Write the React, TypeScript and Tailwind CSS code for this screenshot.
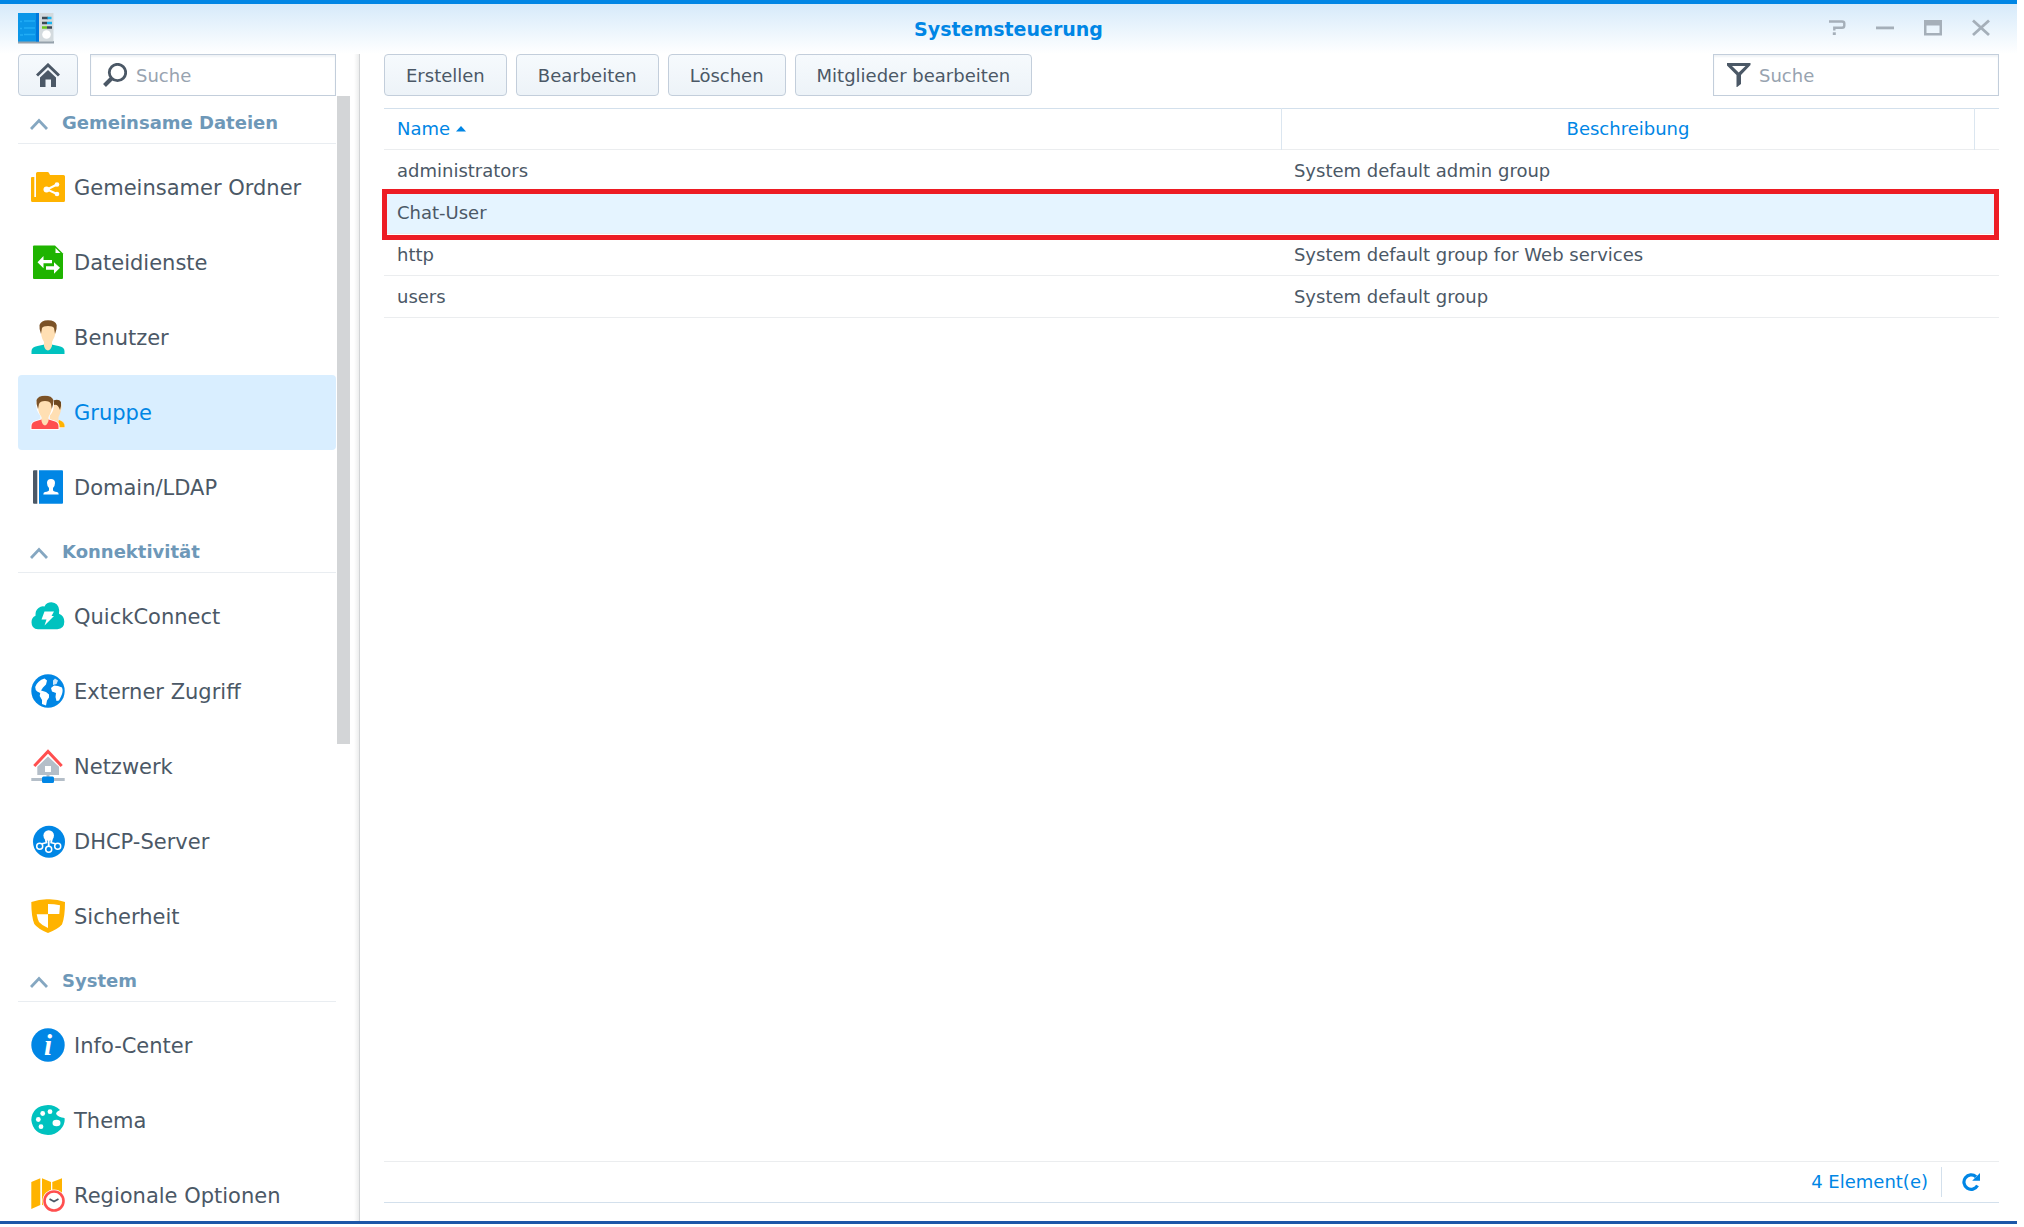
import type { ReactNode } from 'react';

type NavItem = { label: string; icon: ReactNode; active?: boolean };
type NavSection = { title: string; items: NavItem[] };

function Icon({ children }: { children: ReactNode }) {
  return (
    <svg viewBox="0 0 35 35" className="size-[35px] shrink-0" aria-hidden>
      {children}
    </svg>
  );
}

const FolderIcon = (
  <Icon>
    <path d="M2 7h2.300v20H6V3.500Q6 2 7.500 2h10q1 0 1.500 1l1 2h13.500Q35 5 35 6.500v24q0 1.500-1.500 1.500h-31Q1 32 1 30.500V8q0-1 1-1z" fill="#ffb300" />
    <path d="M27 14.500l-10 5 10 4.500" fill="none" stroke="#fff" strokeWidth="2" />
    <circle cx="27" cy="14.500" r="2.300" fill="#fff" />
    <circle cx="16.500" cy="19.500" r="3" fill="#fff" />
    <circle cx="27" cy="24" r="2.300" fill="#fff" />
  </Icon>
);

const FileIcon = (
  <Icon>
    <path d="M4 .5h21l8 8V33q0 1-1 1H4q-1 0-1-1V1.500Q3 .5 4 .5z" fill="#1fb400" />
    <path d="M25.500 3v5h5z" fill="#fff" />
    <path d="M7.500 17.300l6-6.300v4H22v3.300h-8.500v5z" fill="#fff" />
    <path d="M30 22.700l-6 6v-4h-8v-3.400h8v-4z" fill="#fff" />
  </Icon>
);

const UserIcon = (
  <Icon>
    <path d="M1.500 34v-3q0-4 6-5l7-1.500h7l7 1.500q6 1 6 5v3z" fill="#00c2bf" />
    <path d="M11 8q0-4 7-4t7.500 4c.5 7-1.500 10-3.500 14v4q-1.500 4-4 4.500Q15 30 14 26v-4c-2.500-4-3.500-8-3-14z" fill="#ffdfb3" />
    <path d="M11 14Q9 9 9.500 5 11 .5 18 .3q7.500.2 8.700 4.700.5 4-1.700 9L24 8q-1-2-6-2t-6 2z" fill="#7b5227" />
  </Icon>
);

const GroupIcon = (
  <Icon>
    <path d="M20 12q1-8 8-7 4 1 3.500 8c-1 5-2 7-3 9v3q6 1 6 4v4H20z" fill="#ffdfb3" />
    <path d="M29 25q6 2 5.500 7h-7z" fill="#ffb300" />
    <path d="M23 5.500q6-2 8 1.500.5 4-1 8-2-6-6-5z" fill="#6d4820" />
    <path d="M.5 35v-4q0-4 5-5.500l5-1.500v-3C7 17 6 13 6 8q0-7 9-7.500Q24 1 24 8c0 6-1 9-4.500 13v3l5 1.500q5 1.500 5 5V35z" fill="#fff" />
    <path d="M1.500 34v-3q0-4 5-5l5-1.500h7l5 1.500q5 1 5 5v3z" fill="#ff4f4f" />
    <path d="M8 9q0-4 7-4t7 4c.3 6-1.500 9-3.500 13v4q-1.500 4-3.500 4.500-2.500-.5-3.500-4.500v-4C9 18 7.700 15 8 9z" fill="#ffdfb3" />
    <path d="M8 14Q6 9 6.500 5 8 .8 15 .7q7 .1 8.300 4.300.5 4-1.500 9L21 9q-1-3-6-3T9 9z" fill="#7b5227" />
  </Icon>
);

const LdapIcon = (
  <Icon>
    <path d="M4 .3h3.300v33.400H4q-1 0-1-1V1.300q0-1 1-1z" fill="#4b5866" />
    <path d="M9 .3h23q1 0 1 1v31.400q0 1-1 1H9z" fill="#0086e5" />
    <path d="M17 13q0-4 4-4t4 4q0 3-2 5v2q0 1.500 4 2 1.700.3 1.700 2.500H13.300q0-2.200 1.700-2.500 4-.5 4-2v-2q-2-2-2-5z" fill="#fff" />
  </Icon>
);

const CloudIcon = (
  <Icon>
    <path d="M8 30.300q-6.500-.3-6.500-7 0-5 4-6.500-.5-5 3-7.800 3-2.500 6-1.500 2-4.200 7-4.200 7 .7 7.700 8-.2 2-.2 3.500 5.300 2 5.300 8 0 7-7 7.500z" fill="#00c2bf" />
    <path d="M14.500 12.500H24L21.500 17H24l-9.500 9.500 2-6h-5z" fill="#fff" />
  </Icon>
);

const GlobeIcon = (
  <Icon>
    <circle cx="18" cy="17" r="16.700" fill="#0086e5" />
    <path d="M14.500 4.500q-7 2-9.300 8.500 0 3 2 4.500l3 1.500-.5 3 2.300 4v4l4 1.500 1-5 2-3v-3l-3-2.500-5-1.500 2-3 3-3 1-4z" fill="#fff" />
    <path d="M21 14l3-2.500 4 .5 4 1.500q1.500 4-1 9l-2 4-2.500.5-1-4 .5-4-4-1.500z" fill="#fff" />
    <path d="M23 6.500l2-2 3 2-1.500 3.500-3.500 1z" fill="#fff" opacity=".8" />
  </Icon>
);

const HomeNetIcon = (
  <Icon>
    <path d="M18 7.500l11 10.300V26H7.300v-8.200z" fill="#b4bec8" />
    <path d="M4.300 17L18 2.500 31.700 17" fill="none" stroke="#ff4f4f" strokeWidth="3" />
    <rect x="15" y="17" width="6" height="6" fill="#fff" />
    <path d="M1.300 29h33.400v3H1.300zM16.500 26h3v2h-3z" fill="#b4bec8" />
    <rect x="12" y="27.500" width="12" height="6.500" rx="1.500" fill="#0086e5" />
  </Icon>
);

const DhcpIcon = (
  <Icon>
    <circle cx="19" cy="17.700" r="16" fill="#0086e5" />
    <path d="M15.500 14l1 5M18.700 15v7M22 14l-1 5M17 18.500l-6 1.500M20.500 18.500l6 1.500" stroke="#fff" strokeWidth="1.800" />
    <circle cx="18.700" cy="11.500" r="5.300" fill="#fff" />
    <g fill="#0086e5" stroke="#fff" strokeWidth="1.500">
      <circle cx="9.700" cy="22.300" r="3" />
      <circle cx="18.700" cy="25.300" r="3" />
      <circle cx="27.700" cy="22.300" r="3" />
    </g>
  </Icon>
);

const ShieldIcon = (
  <Icon>
    <path d="M1.300 3Q10 0 18 .3 27 0 35 3q0 15-3 22.500Q28 30 18 34 8 30 4.300 25 1.300 18 1.300 3z" fill="#ffb300" />
    <path d="M18 5q6 0 12 1.200l-.7 8.800H18zM6.700 15.300H18V29q-6-2.500-9-6-1.500-3-2.300-7.700z" fill="#fff" />
  </Icon>
);

const InfoIcon = (
  <Icon>
    <circle cx="18" cy="17" r="16.700" fill="#0086e5" />
    <text x="18" y="27" textAnchor="middle" fill="#fff" fontFamily="Liberation Serif, serif" fontSize="29" fontWeight="bold" fontStyle="italic">
      i
    </text>
  </Icon>
);

const PaletteIcon = (
  <Icon>
    <path d="M18 2q7 0 12 5-5 2.500-3.500 4.500 2 2.500 8 3.500 1 6-4 11.500Q25 32 18 32 3 31 1.300 17 2 3 18 2z" fill="#00c2bf" />
    <g fill="#fff">
      <circle cx="20" cy="8.700" r="2.400" />
      <circle cx="12.700" cy="10.500" r="2.400" />
      <circle cx="8.300" cy="16.500" r="2.400" />
      <circle cx="11" cy="23.700" r="2.400" />
      <ellipse cx="26.500" cy="20" rx="4" ry="3.200" />
    </g>
  </Icon>
);

const RegionIcon = (
  <Icon>
    <path d="M1.300 4l9-3.700V27l-9 4zM12 .3L21 4v26l-9-3.300zM22.300 4L32 .3V27l-9.700 3z" fill="#ffb300" />
    <circle cx="24" cy="23" r="11.500" fill="#fff" />
    <circle cx="24" cy="23" r="9.500" fill="#fff" stroke="#ff4f4f" strokeWidth="2.600" />
    <path d="M19.500 21l4.500 2.500 4.500-2.500" fill="none" stroke="#4b5866" strokeWidth="1.800" />
  </Icon>
);

const sections: NavSection[] = [
  {
    title: 'Gemeinsame Dateien',
    items: [
      { label: 'Gemeinsamer Ordner', icon: FolderIcon },
      { label: 'Dateidienste', icon: FileIcon },
      { label: 'Benutzer', icon: UserIcon },
      { label: 'Gruppe', icon: GroupIcon, active: true },
      { label: 'Domain/LDAP', icon: LdapIcon }
    ]
  },
  {
    title: 'Konnektivität',
    items: [
      { label: 'QuickConnect', icon: CloudIcon },
      { label: 'Externer Zugriff', icon: GlobeIcon },
      { label: 'Netzwerk', icon: HomeNetIcon },
      { label: 'DHCP-Server', icon: DhcpIcon },
      { label: 'Sicherheit', icon: ShieldIcon }
    ]
  },
  {
    title: 'System',
    items: [
      { label: 'Info-Center', icon: InfoIcon },
      { label: 'Thema', icon: PaletteIcon },
      { label: 'Regionale Optionen', icon: RegionIcon }
    ]
  }
];

const actions = ['Erstellen', 'Bearbeiten', 'Löschen', 'Mitglieder bearbeiten'];

const groups = [
  { name: 'administrators', description: 'System default admin group' },
  { name: 'Chat-User', description: '', selected: true },
  { name: 'http', description: 'System default group for Web services' },
  { name: 'users', description: 'System default group' }
];

function TitleBar() {
  return (
    <header className="grid h-[50px] shrink-0 grid-cols-3 items-start">
      <div className="flex pt-2 pl-[18px]">
        <svg viewBox="0 0 36 32" className="h-8 w-9" aria-hidden>
          <path d="M0 29h36v2.500H0z" fill="#7d8b96" opacity=".8" />
          <path d="M21 1h14.500v28.500H21z" fill="#d3dade" />
          <path d="M0 1h21v28.500H0z" fill="#0b96e8" />
          <path d="M18 1h3v28.500h-3z" fill="#0078dc" />
          <path d="M2 9.500h2M6 9h11M2 16.500h2M6 16h11M2 23h3M6 22.500h11" stroke="#22adf5" strokeWidth="1.500" />
          <path d="M24 6h6M24 11h5M29 15.500h5" stroke="#3c4a55" strokeWidth="2.500" />
          <path d="M29.500 6h4M29 11h5" stroke="#19b5f0" strokeWidth="2.500" />
          <path d="M24 15.500h5" stroke="#6cc71c" strokeWidth="2.500" />
          <circle cx="28.500" cy="22.500" r="4.300" fill="#fff" />
        </svg>
      </div>
      <h1 className="pt-[13px] text-center text-[19px] leading-6 font-bold text-[#0086e5]">Systemsteuerung</h1>
      <div className="flex justify-end gap-[30px] pt-[15px] pr-[27px] text-[#a5afb9]">
        <button type="button" aria-label="Hilfe">
          <svg viewBox="0 0 18 18" className="size-[18px]" fill="none" stroke="currentColor" strokeWidth="2.400">
            <path d="M1 2.500h13q2.300 0 2.300 2v2q0 2.300-2.300 2.300H6.300v2.700" />
            <path d="M6.300 13.300V16" strokeWidth="3" />
          </svg>
        </button>
        <button type="button" aria-label="Minimieren">
          <svg viewBox="0 0 18 18" className="size-[18px]">
            <path d="M0 7.500h18v2.800H0z" fill="currentColor" />
          </svg>
        </button>
        <button type="button" aria-label="Maximieren">
          <svg viewBox="0 0 18 18" className="size-[18px]">
            <path d="M0 1h18v15.500H0zM2.500 6.500v7.500h13V6.500z" fill="currentColor" fillRule="evenodd" />
          </svg>
        </button>
        <button type="button" aria-label="Schließen">
          <svg viewBox="0 0 18 18" className="size-[18px]" fill="none" stroke="currentColor" strokeWidth="2.800">
            <path d="M1 1.500l16 14.500M17 1.500L1 16" />
          </svg>
        </button>
      </div>
    </header>
  );
}

function Sidebar() {
  return (
    <aside className="flex w-[360px] shrink-0">
      <div className="flex min-w-0 flex-1 flex-col pl-[18px]">
        <div className="flex w-[318px] shrink-0 gap-3">
          <button
            type="button"
            aria-label="Startseite"
            className="flex h-[42px] w-[60px] items-center justify-center rounded border border-[#c3cedb] bg-linear-to-b from-[#f6fafd] to-[#edf3f8]"
          >
            <svg viewBox="0 0 24 24" className="size-6" aria-hidden>
              <path d="M1 12.500L12 2l11 10.500" fill="none" stroke="#4b5866" strokeWidth="3" />
              <path d="M12 7l8 7.500V24h-5v-7.500H9.500V24H4v-9.500z" fill="#4b5866" />
            </svg>
          </button>
          <label className="flex h-[42px] flex-1 items-center border border-[#c3cedb] bg-white pl-3 shadow-[inset_0_2px_2px_#f0f3f6]">
            <svg viewBox="0 0 24 24" className="size-6 shrink-0" fill="none" stroke="#4b5866" aria-hidden>
              <circle cx="14.500" cy="9.500" r="8.200" strokeWidth="2.800" />
              <path d="M8.500 15.500l-7 7" strokeWidth="4" />
            </svg>
            <input type="text" aria-label="Suche" placeholder="Suche" className="ml-[9px] w-full min-w-0 pt-0.5 outline-none placeholder:text-[#98a3b0]" />
          </label>
        </div>
        <div className="flex min-h-0 flex-1">
          <nav className="mr-px w-[318px] overflow-hidden">
            {sections.map((section) => (
              <section key={section.title}>
                <h2 className="mb-1.5 flex h-12 items-center gap-3.5 border-b border-[#e9edf1] pt-1.5 pl-3 font-bold text-[#6e98b8]">
                  <svg viewBox="0 0 18 12" className="mt-0.5 h-3 w-[18px]" fill="none" stroke="#85a7c1" strokeWidth="2.800" aria-hidden>
                    <path d="M1 11l8-8.500L17 11" />
                  </svg>
                  {section.title}
                </h2>
                {section.items.map((item) => (
                  <a
                    key={item.label}
                    href="#"
                    aria-current={item.active ? 'page' : undefined}
                    className={`flex h-[75px] items-center gap-[9px] rounded pl-3 text-[21px] leading-[27px] whitespace-nowrap ${
                      item.active ? 'bg-[#d9eeff] text-[#0086e5]' : ''
                    }`}
                  >
                    {item.icon}
                    <span className="pt-0.5">{item.label}</span>
                  </a>
                ))}
              </section>
            ))}
          </nav>
          <div className="h-[57.6%] w-[13px] bg-[#d3d5d7]" />
        </div>
      </div>
      <div className="w-1.5 border-r border-[#d2d4d6] bg-linear-to-r from-white to-[#eceded]" />
    </aside>
  );
}

function GroupTable() {
  return (
    <table className="w-full table-fixed border-collapse text-left">
      <colgroup>
        <col className="w-[55.600%]" />
        <col />
        <col className="w-[25px]" />
      </colgroup>
      <thead>
        <tr className="h-[41px] border-t border-b border-t-[#d3e0ec] border-b-[#ebedef] text-[#0086e5]">
          <th className="border-r border-[#dbe6f0] px-[13px] font-normal" aria-sort="ascending">
            <button type="button" className="flex items-center gap-1.5">
              Name
              <svg viewBox="0 0 10 6" className="h-1.5 w-2.5" aria-hidden>
                <path d="M5 0l5 5.500H0z" fill="#0086e5" />
              </svg>
            </button>
          </th>
          <th className="border-r border-[#dbe6f0] text-center font-normal">Beschreibung</th>
          <td />
        </tr>
      </thead>
      <tbody>
        {groups.map((group) => (
          <tr key={group.name} className={`h-[42px] border-b border-[#ebedef] ${group.selected ? 'relative bg-[#e5f4ff]' : ''}`}>
            <td className="px-[13px]">
              {group.name}
              {group.selected && (
                <span className="pointer-events-none absolute -top-[3px] right-0 -bottom-[7px] -left-0.5 border-5 border-[#ed1c24]" />
              )}
            </td>
            <td className="px-3">{group.description}</td>
            <td />
          </tr>
        ))}
      </tbody>
    </table>
  );
}

function StatusBar() {
  return (
    <footer className="mb-[18px] flex h-[42px] shrink-0 items-center justify-end border-t border-b border-t-[#ebedef] border-b-[#d3e0ec] pr-[19px] text-[#0086e5]">
      <span>4 Element(e)</span>
      <span className="ml-[13px] h-[30px] w-px bg-[#d3e0ec]" />
      <button type="button" aria-label="Aktualisieren" className="ml-5">
        <svg viewBox="0 0 18 18" className="size-[18px]">
          <path d="M15.500 12.500A7.200 7.200 0 1 1 14 3.800" fill="none" stroke="#0086e5" strokeWidth="3.200" />
          <path d="M18 0v7.800h-7.800z" fill="#0086e5" />
        </svg>
      </button>
    </footer>
  );
}

function GroupPanel() {
  return (
    <main className="flex min-w-0 flex-1 flex-col pr-[18px] pl-6">
      <div className="mb-3 flex justify-between">
        <div className="flex gap-[9px]">
          {actions.map((action) => (
            <button
              key={action}
              type="button"
              className="h-[42px] rounded border border-[#c3cedb] bg-linear-to-b from-[#f6fafd] to-[#edf3f8] px-[21px] pt-0.5"
            >
              {action}
            </button>
          ))}
        </div>
        <label className="flex h-[42px] w-[286px] items-center border border-[#c3cedb] bg-white pl-[13px] shadow-[inset_0_2px_2px_#f0f3f6]">
          <svg viewBox="0 0 24 24" className="size-6 shrink-0" aria-hidden>
            <path d="M0 0h23.500v2L14 12v9l-4.500 3.500V12L0 2.500zM5 3l6.700 6.500L18.500 3z" fill="#4b5866" fillRule="evenodd" />
          </svg>
          <input type="text" aria-label="Suche" placeholder="Suche" className="ml-2 w-full min-w-0 pt-0.5 outline-none placeholder:text-[#98a3b0]" />
        </label>
      </div>
      <div className="min-h-0 flex-1">
        <GroupTable />
      </div>
      <StatusBar />
    </main>
  );
}

export default function App() {
  return (
    <div className="h-screen bg-white pr-[7px] pb-[3px] font-['DejaVu_Sans',Verdana,sans-serif] text-[18px] leading-6 text-[#4b5866]">
      <div className="flex h-full flex-col overflow-hidden border-t-4 border-b-3 border-t-[#0086e5] border-b-[#1c57a8] bg-linear-to-b from-[#d6eafa] to-white to-[50px]">
        <TitleBar />
        <div className="flex min-h-0 flex-1">
          <Sidebar />
          <GroupPanel />
        </div>
      </div>
    </div>
  );
}
